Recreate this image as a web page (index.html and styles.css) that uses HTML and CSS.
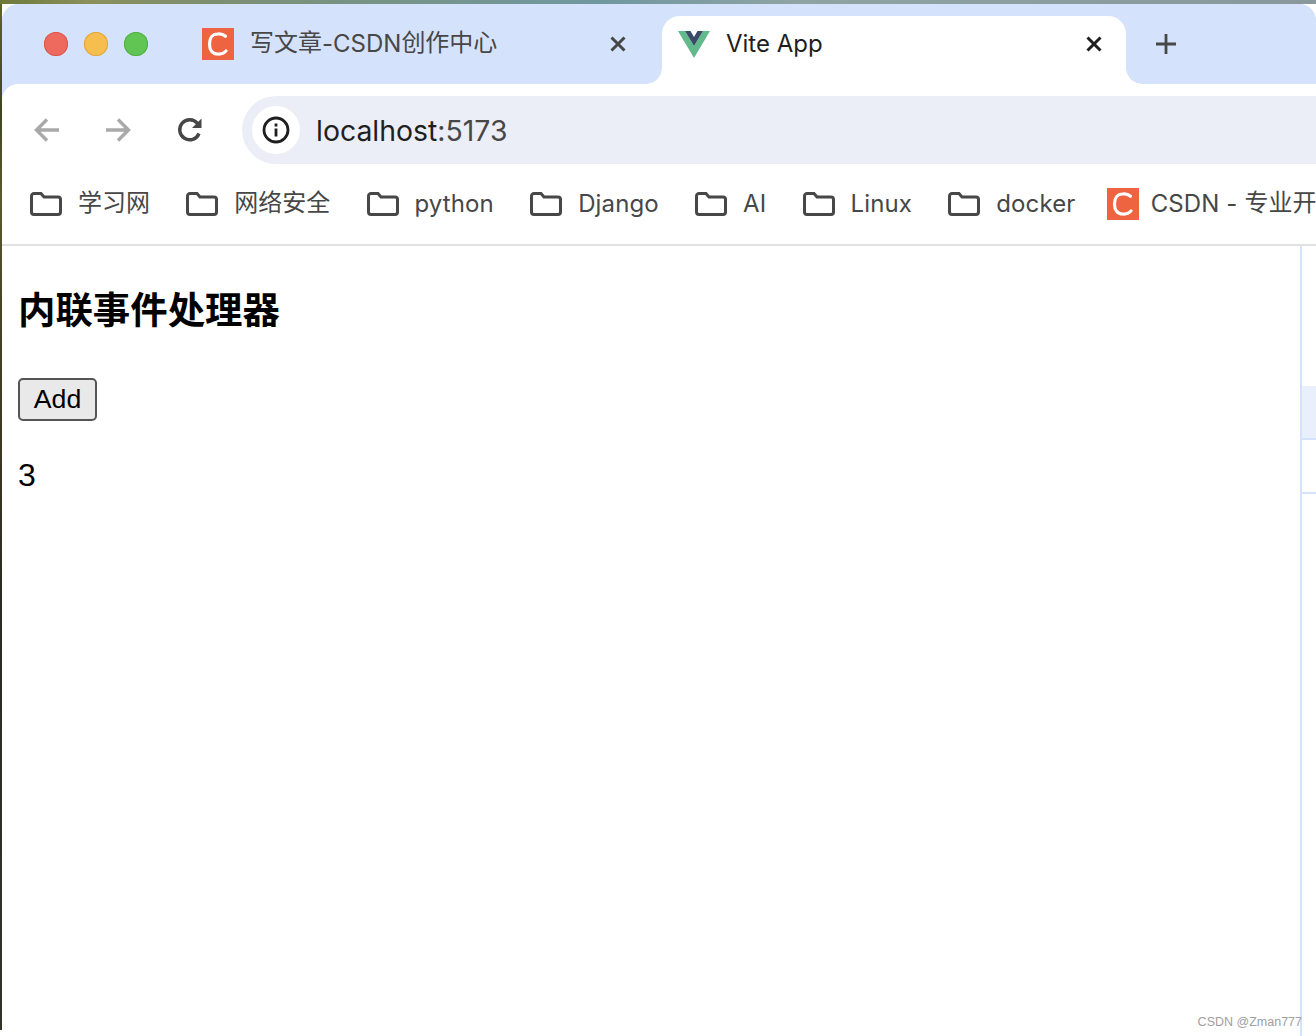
FILE: index.html
```html
<!DOCTYPE html>
<html lang="zh">
<head>
<meta charset="utf-8">
<title>Vite App</title>
<link rel="stylesheet" href="styles.css">
</head>
<body>
<div class="desktop">
  <div class="window">
    <div class="tabstrip">
      <div class="lights">
        <span class="light red"></span>
        <span class="light yellow"></span>
        <span class="light green"></span>
      </div>
      <div class="tab">
        <svg class="fav" viewBox="0 0 32 32"><rect width="32" height="32" fill="#ee6340"/><path d="M23.5 8.2A9.5 9.5 0 0 0 15.5 6C10.5 6 7.5 10 7.5 16S10.5 26 15.5 26A10 10 0 0 0 24 23" fill="none" stroke="#fff" stroke-width="3.2" stroke-linecap="round"/></svg>
        <span class="tab-title"><span class="cjk">写文章</span>-CSDN<span class="cjk">创作中心</span></span>
        <svg class="close" viewBox="0 0 16 16"><path d="M1.5 1.5L14.5 14.5M14.5 1.5L1.5 14.5" stroke="#474747" stroke-width="3" fill="none"/></svg>
      </div>
      <div class="tab active">
        <svg class="fav vue" viewBox="0 0 32 28"><path d="M0 1H7L16 16L25 1H32L16 28Z" fill="#62b98c"/><path d="M7 1H12.5L16 7L19.5 1H25L16 16Z" fill="#3a4a67"/></svg>
        <span class="tab-title">Vite App</span>
        <svg class="close" viewBox="0 0 16 16"><path d="M1.5 1.5L14.5 14.5M14.5 1.5L1.5 14.5" stroke="#1f1f1f" stroke-width="3" fill="none"/></svg>
      </div>
      <svg class="newtab" viewBox="0 0 22 22"><path d="M11 1V21M1 11H21" stroke="#474747" stroke-width="2.8" fill="none"/></svg>
    </div>

    <div class="toolbar">
      <svg class="nav nav-back" viewBox="0 0 28 28"><path d="M26 14H4M14 3.500L3.500 14L14 24.500" stroke="#a9a9a9" stroke-width="3.400" fill="none"/></svg>
      <svg class="nav nav-forward" viewBox="0 0 28 28"><path d="M2 14H24M14 3.500L24.500 14L14 24.500" stroke="#a9a9a9" stroke-width="3.400" fill="none"/></svg>
      <svg class="nav nav-reload" viewBox="0 0 28 28"><path d="M23 17.500A10 10 0 1 1 21.500 7.500L24 10.500" stroke="#474747" stroke-width="3.400" fill="none"/><path d="M25.500 2.500V12H16Z" fill="#474747"/></svg>
      <div class="omnibox">
        <span class="site-info">
          <svg viewBox="0 0 28 28" class="info"><circle cx="14" cy="14" r="12" stroke="#1f1f1f" stroke-width="2.800" fill="none"/><rect x="12.600" y="12.500" width="2.800" height="8" fill="#1f1f1f"/><rect x="12.600" y="7.500" width="2.800" height="3" fill="#1f1f1f"/></svg>
        </span>
        <span class="url">localhost<span class="url-port">:5173</span></span>
      </div>
    </div>

    <div class="bookmarks">
      <div class="bm"><svg class="folder" viewBox="0 0 32 24"><path d="M1.500 4A2.500 2.500 0 0 1 4 1.500H11L14 5H28A2.500 2.500 0 0 1 30.500 7.500V20A2.500 2.500 0 0 1 28 22.500H4A2.500 2.500 0 0 1 1.500 20Z" fill="none" stroke="#474747" stroke-width="3"/></svg><span class="bm-label"><span class="cjk">学习网</span></span></div>
      <div class="bm"><svg class="folder" viewBox="0 0 32 24"><path d="M1.500 4A2.500 2.500 0 0 1 4 1.500H11L14 5H28A2.500 2.500 0 0 1 30.500 7.500V20A2.500 2.500 0 0 1 28 22.500H4A2.500 2.500 0 0 1 1.500 20Z" fill="none" stroke="#474747" stroke-width="3"/></svg><span class="bm-label"><span class="cjk">网络安全</span></span></div>
      <div class="bm"><svg class="folder" viewBox="0 0 32 24"><path d="M1.500 4A2.500 2.500 0 0 1 4 1.500H11L14 5H28A2.500 2.500 0 0 1 30.500 7.500V20A2.500 2.500 0 0 1 28 22.500H4A2.500 2.500 0 0 1 1.500 20Z" fill="none" stroke="#474747" stroke-width="3"/></svg><span class="bm-label">python</span></div>
      <div class="bm"><svg class="folder" viewBox="0 0 32 24"><path d="M1.500 4A2.500 2.500 0 0 1 4 1.500H11L14 5H28A2.500 2.500 0 0 1 30.500 7.500V20A2.500 2.500 0 0 1 28 22.500H4A2.500 2.500 0 0 1 1.500 20Z" fill="none" stroke="#474747" stroke-width="3"/></svg><span class="bm-label">Django</span></div>
      <div class="bm"><svg class="folder" viewBox="0 0 32 24"><path d="M1.500 4A2.500 2.500 0 0 1 4 1.500H11L14 5H28A2.500 2.500 0 0 1 30.500 7.500V20A2.500 2.500 0 0 1 28 22.500H4A2.500 2.500 0 0 1 1.500 20Z" fill="none" stroke="#474747" stroke-width="3"/></svg><span class="bm-label">AI</span></div>
      <div class="bm"><svg class="folder" viewBox="0 0 32 24"><path d="M1.500 4A2.500 2.500 0 0 1 4 1.500H11L14 5H28A2.500 2.500 0 0 1 30.500 7.500V20A2.500 2.500 0 0 1 28 22.500H4A2.500 2.500 0 0 1 1.500 20Z" fill="none" stroke="#474747" stroke-width="3"/></svg><span class="bm-label">Linux</span></div>
      <div class="bm"><svg class="folder" viewBox="0 0 32 24"><path d="M1.500 4A2.500 2.500 0 0 1 4 1.500H11L14 5H28A2.500 2.500 0 0 1 30.500 7.500V20A2.500 2.500 0 0 1 28 22.500H4A2.500 2.500 0 0 1 1.500 20Z" fill="none" stroke="#474747" stroke-width="3"/></svg><span class="bm-label">docker</span></div>
      <div class="bm bm-site"><svg class="fav" viewBox="0 0 32 32"><rect width="32" height="32" fill="#ee6340"/><path d="M23.500 8.200A9.500 9.500 0 0 0 15.500 6C10.500 6 7.500 10 7.500 16S10.500 26 15.500 26A10 10 0 0 0 24 23" fill="none" stroke="#fff" stroke-width="3.200" stroke-linecap="round"/></svg><span class="bm-label">CSDN - <span class="cjk">专业开发者社区</span></span></div>
    </div>

    <div class="viewport">
      <main class="page">
        <h3 class="page-title">内联事件处理器</h3>
        <button class="add-btn" type="button">Add</button>
        <p class="count">3</p>
      </main>
      <aside class="side">
        <div class="side-row side-head"></div>
        <div class="side-row side-cell"></div>
        <div class="side-row"></div>
      </aside>
      <div class="watermark">CSDN @Zman777</div>
    </div>
  </div>
</div>
</body>
</html>
```
FILE: styles.css
```css
* { box-sizing: border-box; }
html, body { margin: 0; height: 100%; overflow: hidden; background: #fff; }
body { font-family: Inter, "Noto Sans CJK SC", sans-serif; }

.desktop {
  width: 1316px;
  height: 1036px;
  padding: 4px 0 0 2px;
  background:
    linear-gradient(90deg, #6f7a3a 0, #8a8f5c 90px, #7c8f73 220px, #6f98a0 600px, #8fa3a3 800px, #88989c 1316px) top left / 100% 4px no-repeat,
    linear-gradient(180deg, #5f6628 0, #3f4420 110px, #5a5a2e 200px, #4a4426 300px, #2a2a20 600px, #33332a 1030px, #fff 1030px) top left / 2px 100% no-repeat,
    #fff;
}

.window {
  height: 100%;
  display: flex;
  flex-direction: column;
  background: #d5e2fb;
  border-radius: 17px 17px 0 0;
  overflow: hidden;
}

/* Shared raise for CJK runs, whose glyphs sit low against the Latin baseline */
.cjk { line-height: 0; vertical-align: 1px; }

/* Tab strip */
.tabstrip {
  flex: none;
  height: 80px;
  background: #d5e2fb;
  display: flex;
  align-items: flex-end;
}
.lights {
  flex: none;
  width: 200px;
  height: 80px;
  padding: 28px 0 0 42px;
  display: flex;
  gap: 16px;
}
.light { width: 24px; height: 24px; border-radius: 50%; }
.red { background: #ee6a5f; box-shadow: inset 0 0 0 1px #d9584e; }
.yellow { background: #f6be4f; box-shadow: inset 0 0 0 1px #dfa53c; }
.green { background: #61c554; box-shadow: inset 0 0 0 1px #52ae46; }

.tab {
  flex: none;
  width: 460px;
  height: 68px;
  display: flex;
  align-items: center;
  padding: 0 0 12px;
  color: #474747;
  font-size: 24px;
  position: relative;
}
.tab .fav { width: 32px; height: 32px; flex: none; }
.tab-title { margin: 0 0 2px 16px; flex: 1; white-space: nowrap; }
.close { width: 16px; height: 16px; flex: none; margin-right: 36px; }

.tab.active {
  width: 464px;
  background: #fff;
  border-radius: 18px 18px 0 0;
  color: #1f1f1f;
  padding-left: 16px;
}
.tab.active .close { margin-right: 24px; }
.tab .vue { height: 28px; }
.tab.active::before,
.tab.active::after {
  content: "";
  position: absolute;
  bottom: 0;
  width: 16px;
  height: 16px;
}
.tab.active::before { left: -16px; background: radial-gradient(circle at 0 0, transparent 15.500px, #fff 16px); }
.tab.active::after { right: -16px; background: radial-gradient(circle at 100% 0, transparent 15.500px, #fff 16px); }

.newtab { flex: none; width: 22px; height: 22px; margin: 0 0 29px 29px; }

/* Toolbar */
.toolbar {
  flex: none;
  height: 94px;
  background: #fff;
  border-radius: 16px 0 0 0;
  display: flex;
  align-items: flex-start;
  padding: 12px 0 0 31px;
}
.nav { width: 28px; height: 28px; flex: none; margin-top: 20px; }
.nav-forward { margin-left: 43px; }
.nav-reload { margin-left: 44px; }
.omnibox {
  flex: 1;
  height: 68px;
  margin-left: 38px;
  background: #ebeef6;
  border-radius: 34px 0 0 34px;
  display: flex;
  align-items: center;
  padding-left: 10px;
  min-width: 0;
}
.site-info {
  width: 48px;
  height: 48px;
  border-radius: 50%;
  background: #fff;
  display: flex;
  align-items: center;
  justify-content: center;
  flex: none;
}
.info { width: 28px; height: 28px; }
.url { margin-left: 16px; font-size: 28.400px; color: #1f1f1f; white-space: nowrap; }
.url-port { color: #474747; }

/* Bookmarks */
.bookmarks {
  flex: none;
  height: 68px;
  background: #fff;
  border-bottom: 2px solid #e1e1e1;
  display: flex;
  align-items: flex-start;
  padding: 10px 0 0 28px;
  gap: 36.250px;
  overflow: hidden;
  color: #474747;
  font-size: 24px;
  white-space: nowrap;
}
.bm { display: flex; align-items: center; gap: 16px; flex: none; height: 32px; }
.bm-label { margin-bottom: 2px; letter-spacing: 0.120px; }
.bm-label .cjk { letter-spacing: 0; }
.folder { width: 32px; height: 24px; flex: none; }
.bm-site { gap: 12px; margin-left: -5px; }
.bm-site .fav { width: 32px; height: 32px; flex: none; }

/* Page */
.viewport {
  flex: 1;
  min-height: 0;
  display: flex;
  position: relative;
  background: #fff;
}
.page {
  flex: 1;
  padding: 0 16px;
  font-family: "Liberation Sans", "Noto Sans CJK SC", sans-serif;
  color: #000;
}
.page-title {
  margin: 38px 0 40px;
  font-size: 37.440px;
  line-height: 54px;
  font-weight: 700;
}
.add-btn {
  display: block;
  width: 79px;
  height: 43px;
  padding: 0;
  font: 26.670px "Liberation Sans", sans-serif;
  color: #000;
  background: #e9e9e9;
  border: 2px solid #555;
  border-radius: 5px;
}
.count {
  margin: 36px 0 0;
  font-size: 32px;
  line-height: 37px;
}
.side {
  flex: none;
  width: 16px;
  border-left: 2px solid #d6e2fb;
  display: flex;
  flex-direction: column;
}
.side-row { height: 54px; border-bottom: 2px solid #d6e2fb; }
.side-head { height: 140px; border-bottom: 0; }
.side-cell { background: #eaf0fb; }
.watermark {
  position: absolute;
  right: 14px;
  bottom: 7px;
  font: 12.500px "Liberation Sans", sans-serif;
  color: #a0a0a0;
}
```
